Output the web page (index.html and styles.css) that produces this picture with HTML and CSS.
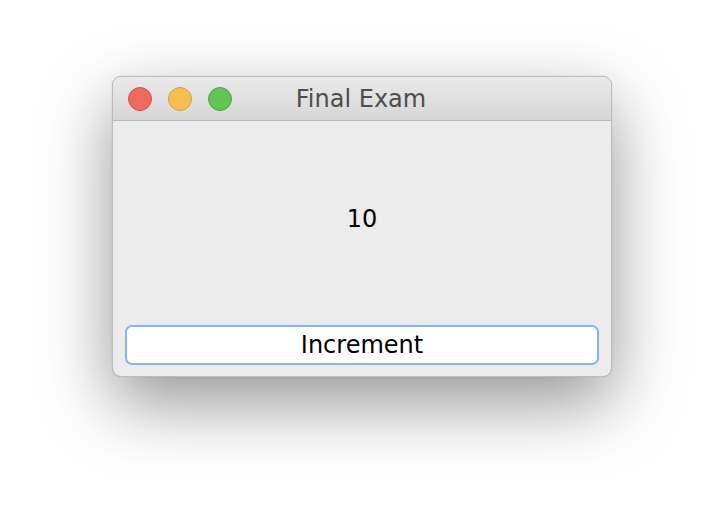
FILE: index.html
```html
<!DOCTYPE html>
<html>
	<head>
		<meta charset="utf-8">
		<link rel="stylesheet" href="styles.css">
	</head>
	<body>
		<div class="window">
			<div class="titleBar">
				<div class="lights">
					<span class="light close"></span>
					<span class="light minimize"></span>
					<span class="light zoom"></span>
				</div>
				<div class="title">Final Exam</div>
			</div>
			<div class="content">
				<div id="countLabel" class="countLabel">10</div>
				<button id="incrementButton" class="incrementButton">Increment</button>
			</div>
		</div>
		<script>
			const countLabel = document.getElementById("countLabel");
			const incrementButton = document.getElementById("incrementButton");
			let count = 10;

			incrementButton.addEventListener("click", function() {
				count++;
				countLabel.textContent = count.toString();
			});
		</script>
	</body>
</html>
```

FILE: styles.css
```css
html {
	height: 100%;
	background-color: rgb(255, 255, 255);
}

body {
	margin: 0;
	min-height: 100%;
	box-sizing: border-box;
	padding: 76px 0 0 112px;
	font-family: "DejaVu Sans", "Liberation Sans", sans-serif;
}

.window {
	display: flex;
	flex-direction: column;
	width: 500px;
	height: 301px;
	box-sizing: border-box;
	border: 1px solid rgb(188, 188, 188);
	border-radius: 9px;
	background-color: rgb(236, 236, 236);
	box-shadow: 0 26px 70px rgba(0, 0, 0, 0.42), 0 0 1px rgba(0, 0, 0, 0.3);
	overflow: hidden;
}

.titleBar {
	position: relative;
	display: flex;
	align-items: center;
	height: 43px;
	flex-shrink: 0;
	border-bottom: 1px solid rgb(185, 185, 185);
	background: linear-gradient(rgb(234, 234, 234), rgb(214, 214, 214));
}

.lights {
	display: flex;
	gap: 16px;
	padding-left: 15px;
}

.light {
	display: block;
	width: 24px;
	height: 24px;
	border-radius: 50%;
	box-sizing: border-box;
}
.light.close {
	background-color: rgb(237, 106, 94);
	border: 1px solid rgb(214, 82, 72);
}
.light.minimize {
	background-color: rgb(245, 191, 79);
	border: 1px solid rgb(216, 160, 60);
}
.light.zoom {
	background-color: rgb(97, 197, 84);
	border: 1px solid rgb(80, 168, 66);
}

.title {
	position: absolute;
	left: 0;
	right: 0;
	text-align: center;
	padding-right: 2px;
	font-size: 24px;
	color: rgb(77, 77, 77);
	pointer-events: none;
}

.content {
	flex: 1;
	display: flex;
	flex-direction: column;
	padding: 0 12px 11px 12px;
}

.countLabel {
	flex: 1;
	display: flex;
	align-items: center;
	justify-content: center;
	padding-bottom: 8px;
	font-size: 24px;
	color: rgb(0, 0, 0);
}

.incrementButton {
	height: 40px;
	margin: 0;
	padding: 0;
	font-family: inherit;
	font-size: 24px;
	color: rgb(0, 0, 0);
	background-color: rgb(255, 255, 255);
	border: 2px solid rgb(133, 181, 238);
	border-radius: 7px;
}
```
